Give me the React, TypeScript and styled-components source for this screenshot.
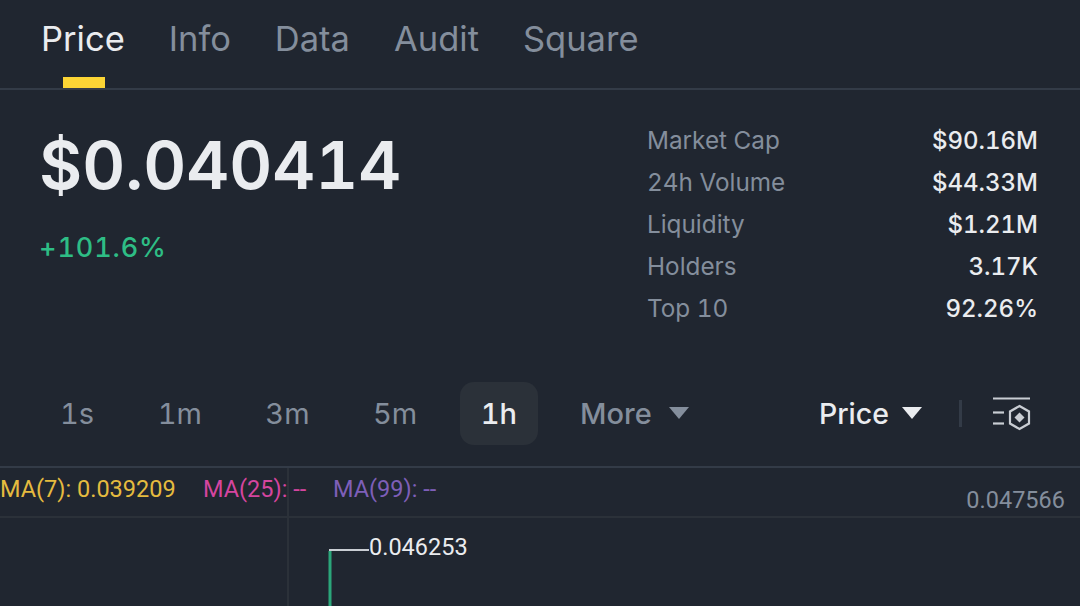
import React from "react";
import styled, {createGlobalStyle} from "styled-components";

const GlobalStyle = createGlobalStyle`
  html, body {
    margin: 0;
    padding: 0;
    background: #202630;
  }
  * {
    box-sizing: border-box;
  }
`

const Page = styled.div`
  width: 1080px;
  height: 606px;
  overflow: hidden;
  background: #202630;
  font-family: Inter, "Noto Sans", sans-serif;
  font-variant-numeric: tabular-nums;
  display: flex;
  flex-direction: column;
`

const TabBar = styled.div`
  height: 90px;
  flex: none;
  display: flex;
  gap: 44px;
  padding-left: 41px;
  border-bottom: 2px solid #333B47;
`

const Tab = styled.div<{ $active?: boolean }>`
  position: relative;
  height: 88px;
  padding-top: 19px;
  font-size: 34.5px;
  line-height: 40px;
  color: ${props => props.$active ? "#EAECEF" : "#848E9C"};

  ${props => props.$active && `
    &::after {
      content: "";
      position: absolute;
      left: 22px;
      bottom: 0;
      width: 42px;
      height: 11px;
      background: #FCD535;
    }
  `}
`

const Summary = styled.div`
  height: 292px;
  flex: none;
  display: flex;
  justify-content: space-between;
  padding: 30px 42px 0 39px;
`

const PriceBlock = styled.div`
  display: flex;
  flex-direction: column;
`

const BigPrice = styled.div`
  font-size: 66.5px;
  line-height: 90px;
  font-weight: 600;
  color: #EAECEF;
`

const Change = styled.div`
  margin-top: 20px;
  font-size: 27px;
  line-height: 36px;
  font-weight: 500;
  letter-spacing: 0.9px;
  color: #2EBD85;
`

const Stats = styled.div`
  width: 391px;
  margin-top: -1px;
  display: flex;
  flex-direction: column;
`

const StatRow = styled.div`
  height: 42px;
  display: flex;
  align-items: center;
  justify-content: space-between;
`

const StatLabel = styled.span`
  font-size: 24.3px;
  color: #848E9C;
`

const StatValue = styled.span`
  font-size: 24px;
  color: #EAECEF;
  font-weight: 500;
`

const IntervalBar = styled.div`
  height: 86px;
  flex: none;
  display: flex;
  align-items: flex-start;
  gap: 21.5px;
  padding-left: 39px;
  border-bottom: 2px solid #333B47;
`

const Interval = styled.div<{ $active?: boolean }>`
  height: 63px;
  padding: 0 21px;
  display: flex;
  align-items: center;
  justify-content: center;
  border-radius: 14px;
  font-size: 29px;
  background: ${props => props.$active ? "#2B3139" : "transparent"};
  color: ${props => props.$active ? "#EAECEF" : "#848E9C"};
  font-weight: ${props => props.$active ? 500 : 400};
`

const Dropdown = styled.div<{ $light?: boolean }>`
  height: 63px;
  margin-left: ${props => props.$light ? 0 : 20.5}px;
  display: flex;
  align-items: center;
  gap: ${props => props.$light ? 13 : 17}px;
  font-size: ${props => props.$light ? 28.5 : 29}px;
  font-weight: 500;
  color: ${props => props.$light ? "#EAECEF" : "#848E9C"};
`

const Caret = styled.span<{ $light?: boolean }>`
  width: 0;
  height: 0;
  margin-top: -2px;
  border-left: 10px solid transparent;
  border-right: 10px solid transparent;
  border-top: 12px solid ${props => props.$light ? "#EAECEF" : "#848E9C"};
`

const BarRight = styled.div`
  margin-left: auto;
  height: 63px;
  padding-right: 49px;
  display: flex;
  align-items: center;
`

const Divider = styled.span`
  width: 3px;
  height: 27px;
  margin: 0 31px 0 37px;
  background: #333B47;
`

const Chart = styled.div`
  position: relative;
  flex: 1;
`

const MaRow = styled.div`
  height: 50px;
  display: flex;
  align-items: center;
  padding-bottom: 6px;
  border-bottom: 2px solid #2B3139;
  font-family: Roboto, sans-serif;
  font-size: 23.5px;
`

const Ma = styled.span<{ $color: string; $width: number }>`
  width: ${props => props.$width}px;
  flex: none;
  color: ${props => props.$color};
  white-space: nowrap;
`

const VerticalGrid = styled.div`
  position: absolute;
  left: 287px;
  top: 0;
  bottom: 0;
  width: 2px;
  background: #2B3139;
`

const AxisLabel = styled.div`
  position: absolute;
  right: 15px;
  top: 18px;
  font-family: Roboto, sans-serif;
  font-size: 23.5px;
  line-height: 28px;
  color: #848E9C;
`

const CandleMark = styled.svg`
  position: absolute;
  left: 328px;
  top: 80px;
`

const HighLabel = styled.div`
  position: absolute;
  left: 369px;
  top: 65px;
  font-family: Roboto, sans-serif;
  font-size: 23.5px;
  line-height: 28px;
  color: #EAECEF;
`

const SettingsIcon = () => (
  <svg width="38" height="34" viewBox="0 0 38 34" fill="none" stroke="#C9CDD3" strokeWidth="2.2">
    <path d="M0 1.5H37"/>
    <path d="M0 15.5H11"/>
    <path d="M0 26.5H11"/>
    <path d="M26.5 9L36 14.5V26.5L26.5 32L17 26.5V14.5Z"/>
    <path d="M26.5 15.5L31.5 20.5L26.5 25.5L21.5 20.5Z" fill="#C9CDD3" stroke="none"/>
  </svg>
)

const stats = [
  ["Market Cap", "$90.16M"],
  ["24h Volume", "$44.33M"],
  ["Liquidity", "$1.21M"],
  ["Holders", "3.17K"],
  ["Top 10", "92.26%"],
]

export default function App() {
  return <Page>
    <GlobalStyle/>
    <TabBar>
      <Tab $active>Price</Tab>
      <Tab>Info</Tab>
      <Tab>Data</Tab>
      <Tab>Audit</Tab>
      <Tab>Square</Tab>
    </TabBar>
    <Summary>
      <PriceBlock>
        <BigPrice>$0.040414</BigPrice>
        <Change>+101.6%</Change>
      </PriceBlock>
      <Stats>
        {stats.map(([label, value]) => <StatRow key={label}>
          <StatLabel>{label}</StatLabel>
          <StatValue>{value}</StatValue>
        </StatRow>)}
      </Stats>
    </Summary>
    <IntervalBar>
      {["1s", "1m", "3m", "5m"].map(name => <Interval key={name}>{name}</Interval>)}
      <Interval $active>1h</Interval>
      <Dropdown>More <Caret/></Dropdown>
      <BarRight>
        <Dropdown $light>Price <Caret $light/></Dropdown>
        <Divider/>
        <SettingsIcon/>
      </BarRight>
    </IntervalBar>
    <Chart>
      <MaRow>
        <Ma $color="#E5BB3F" $width={203}>MA(7): 0.039209</Ma>
        <Ma $color="#D5459F" $width={130}>MA(25): --</Ma>
        <Ma $color="#7E5FB8" $width={120}>MA(99): --</Ma>
      </MaRow>
      <VerticalGrid/>
      <AxisLabel>0.047566</AxisLabel>
      <CandleMark width="42" height="60" viewBox="0 0 42 60" fill="none">
        <path d="M1 2H41" stroke="#C9CDD3" strokeWidth="2"/>
        <path d="M2 3V60" stroke="#2BA67A" strokeWidth="3"/>
      </CandleMark>
      <HighLabel>0.046253</HighLabel>
    </Chart>
  </Page>
}
